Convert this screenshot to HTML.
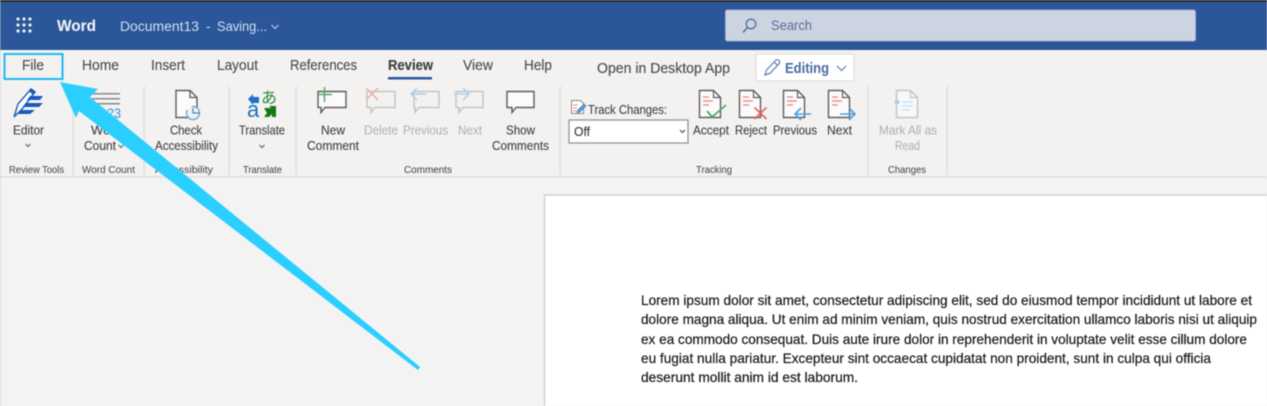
<!DOCTYPE html>
<html><head><meta charset="utf-8"><title>Word</title>
<style>
html,body{margin:0;padding:0;width:1267px;height:406px;overflow:hidden;background:#f3f3f3}
svg{display:block;filter:blur(.42px)}
text{font-family:"Liberation Sans",sans-serif;font-size:12.5px;fill:#444;stroke:#444;stroke-width:.12}
.n{font-size:14.5px;fill:#4b4b4b;stroke:#4b4b4b}
.g{font-size:10.5px;fill:#555;stroke:#555}
.d{fill:#b5b5b5;stroke:#b5b5b5}
.b{font-size:14px;fill:#1a1a1a;stroke:#1a1a1a;stroke-width:.22}
.s{fill:none;stroke:#605e5c;stroke-width:1.4}
.l{fill:none;stroke:#c4c4c4;stroke-width:1.4}
</style></head><body>
<svg width="1267" height="406" viewBox="0 0 1267 406" xmlns="http://www.w3.org/2000/svg">
<rect width="1267" height="406" fill="#f3f3f3"/>
<rect width="1267" height="50" fill="#2b579a"/>
<rect width="1267" height="2" fill="#252525"/>
<rect y="50" width="1267" height="126" fill="#f3f2f1"/>
<rect y="176" width="1267" height="2" fill="#e3e2e1"/>
<rect width="1" height="406" y="2" fill="#9a9a9a" opacity=".25"/>

<!-- waffle -->
<g fill="#e8edf5"><circle cx="18" cy="19" r="1.6"/><circle cx="24" cy="19" r="1.6"/><circle cx="30" cy="19" r="1.6"/><circle cx="18" cy="25" r="1.6"/><circle cx="24" cy="25" r="1.6"/><circle cx="30" cy="25" r="1.6"/><circle cx="18" cy="31" r="1.6"/><circle cx="24" cy="31" r="1.6"/><circle cx="30" cy="31" r="1.6"/></g>
<text x="57" y="31" textLength="39" lengthAdjust="spacingAndGlyphs" style="font-size:16px;font-weight:bold;fill:#f5f7fa;stroke:none">Word</text>
<text x="120" y="31" textLength="79" lengthAdjust="spacingAndGlyphs" style="font-size:14px;fill:#d5deec;stroke:none">Document13</text>
<text x="206" y="31" style="font-size:14px;fill:#d5deec;stroke:none">-</text>
<text x="217" y="31" textLength="50" lengthAdjust="spacingAndGlyphs" style="font-size:14px;fill:#d5deec;stroke:none">Saving...</text>
<path d="M271.500 25l3.500 3.500 3.500-3.500" fill="none" stroke="#c3cfe2" stroke-width="1"/>

<!-- search -->
<rect x="725.500" y="10" width="470" height="31" rx="2" fill="#cdd4e1" stroke="#a9b8d2" stroke-width=".8"/>
<circle cx="751" cy="24" r="4.800" fill="none" stroke="#54709f" stroke-width="1.300"/>
<path d="M747.500 27.500l-4.500 5" stroke="#54709f" stroke-width="1.500" fill="none"/>
<text x="771" y="30" textLength="41" lengthAdjust="spacingAndGlyphs" style="font-size:14px;fill:#55709c;stroke:none">Search</text>

<!-- tabs -->
<text class="n" x="22" y="70" textLength="22" lengthAdjust="spacingAndGlyphs">File</text>
<text class="n" x="82" y="70" textLength="37" lengthAdjust="spacingAndGlyphs">Home</text>
<text class="n" x="151" y="70" textLength="34" lengthAdjust="spacingAndGlyphs">Insert</text>
<text class="n" x="217" y="70" textLength="41" lengthAdjust="spacingAndGlyphs">Layout</text>
<text class="n" x="290" y="70" textLength="67" lengthAdjust="spacingAndGlyphs">References</text>
<text class="n" x="388" y="70" textLength="45" lengthAdjust="spacingAndGlyphs" style="font-weight:bold;fill:#3a3a3a">Review</text>
<rect x="388" y="77" width="44" height="2.500" fill="#2b579a"/>
<text class="n" x="463" y="70" textLength="30" lengthAdjust="spacingAndGlyphs">View</text>
<text class="n" x="524" y="70" textLength="28" lengthAdjust="spacingAndGlyphs">Help</text>
<text class="n" x="597" y="73" textLength="133" lengthAdjust="spacingAndGlyphs">Open in Desktop App</text>
<rect x="756" y="54" width="98" height="27" rx="2" fill="#fff" stroke="#e1dfdd" stroke-width="1.200"/>
<path d="M765 75l1.500-5 9-9.500c1.200-1.200 2.600-1 3.500 0s1 2.300 0 3.300l-9 9.500z M774 62l4 3.800" fill="none" stroke="#5f7fb5" stroke-width="1.200"/>
<text x="785" y="73" textLength="44" lengthAdjust="spacingAndGlyphs" style="font-size:15px;font-weight:bold;fill:#4a6aa3;stroke:none">Editing</text>
<path d="M837 66l4.500 4.500 4.500-4.500" fill="none" stroke="#5f7fb5" stroke-width="1.200"/>

<!-- separators -->
<g fill="#dcdbda"><rect x="72.500" y="86" width="1.300" height="89"/><rect x="143.500" y="86" width="1.300" height="89"/><rect x="228.500" y="86" width="1.300" height="89"/><rect x="295.500" y="86" width="1.300" height="89"/><rect x="559.500" y="86" width="1.300" height="89"/><rect x="867.500" y="86" width="1.300" height="89"/><rect x="946.500" y="86" width="1.300" height="89"/></g>

<!-- Editor icon -->
<path d="M14 117l4-13 13-15 4 3-13 17z" fill="#fff" stroke="#2a63c4" stroke-width="1.500"/>
<g fill="#185abd"><path d="M30 96h13l-3 4H27z"/><path d="M26 103h17l-4 4H23z"/><path d="M21 110h14l-5 4H18z"/><path d="M31 88l5 4-3 3-4-4z"/></g>
<text x="13" y="134.500" textLength="31" lengthAdjust="spacingAndGlyphs">Editor</text>
<path d="M25.500 144l2.500 2.500 2.500-2.500" fill="none" stroke="#555" stroke-width="1"/>

<!-- Word count -->
<g fill="#8a8a8a"><rect x="92" y="93" width="28" height="1.500"/><rect x="92" y="98" width="28" height="1.500"/><rect x="92" y="103" width="28" height="1.500"/></g>
<text x="100" y="118" textLength="21" lengthAdjust="spacingAndGlyphs" style="font-size:14px;fill:#3f8fd0;stroke:none">123</text>
<text x="91" y="134.500" textLength="31" lengthAdjust="spacingAndGlyphs">Word</text>
<text x="84" y="150" textLength="32" lengthAdjust="spacingAndGlyphs">Count</text>
<path d="M118.500 145l2.500 2.500 2.500-2.500" fill="none" stroke="#555" stroke-width="1"/>

<!-- Check accessibility -->
<path d="M176 90.500h14l7 7v20h-21z" style="fill:#fbfbfb" class="s"/>
<path d="M190 90.500v7h7" fill="none" stroke="#605e5c" stroke-width="1.300"/>
<circle cx="193" cy="113" r="6.500" fill="#f3f2f1" stroke="#6ea9dc" stroke-width="1.400" stroke-dasharray="30 6" transform="rotate(-60 193 113)"/>
<path d="M193 108v5h7" fill="none" stroke="#3f8fd0" stroke-width="1.300"/>
<text x="170" y="134.500" textLength="32" lengthAdjust="spacingAndGlyphs">Check</text>
<text x="155" y="150" textLength="63" lengthAdjust="spacingAndGlyphs">Accessibility</text>

<!-- Translate -->
<path d="M248 99l5-5v3h6v6h-6v2z" fill="#1f6fc4"/>
<text x="247" y="117" style="font-size:22px;fill:#1f6fc4;stroke:none">a</text>
<text x="261" y="103" style="font-family:'Noto Sans CJK JP',sans-serif;font-size:16px;fill:#2c8a3c;stroke:none">あ</text>
<path d="M264 108h7l-2-2h7v11h-4l0-3-3 3h-5l3-4z" fill="#107c10"/>
<text x="239" y="134.500" textLength="46" lengthAdjust="spacingAndGlyphs">Translate</text>
<path d="M259.500 145l2.500 2.500 2.500-2.500" fill="none" stroke="#555" stroke-width="1"/>

<!-- New comment -->
<path class="s" d="M318 91.500h28v16h-21l-4 5v-5h-3z" style="fill:#fbfbfb"/>
<path d="M324.500 87v15M317 94.500h15" stroke="#54a868" stroke-width="1.500" fill="none"/>
<text x="321" y="134.500" textLength="24" lengthAdjust="spacingAndGlyphs">New</text>
<text x="307" y="150" textLength="52" lengthAdjust="spacingAndGlyphs">Comment</text>

<!-- Delete -->
<path class="l" d="M367 91.500h28v16h-20l-4 5v-5h-4z"/>
<path d="M366 88l12 12M378 88l-12 12" stroke="#f0a8a4" stroke-width="1.400" fill="none"/>
<text class="d" x="364" y="134.500" textLength="34" lengthAdjust="spacingAndGlyphs">Delete</text>
<!-- Previous -->
<path class="l" d="M414 91.500h25v16h-20l-4 5v-5h-1z"/>
<path d="M426 94h-14m5-6l-6 6 6 6" stroke="#a9cfee" stroke-width="1.400" fill="none"/>
<text class="d" x="403" y="134.500" textLength="45" lengthAdjust="spacingAndGlyphs">Previous</text>
<!-- Next -->
<path class="l" d="M456 91.500h27v16h-20l-4 5v-5h-3z"/>
<path d="M454 94h14m-5-6l6 6-6 6" stroke="#a9cfee" stroke-width="1.400" fill="none"/>
<text class="d" x="458" y="134.500" textLength="24" lengthAdjust="spacingAndGlyphs">Next</text>
<!-- Show -->
<path class="s" d="M507 91.500h27v16h-18l-4 5v-5h-5z" style="fill:#fbfbfb"/>
<text x="506" y="134.500" textLength="29" lengthAdjust="spacingAndGlyphs">Show</text>
<text x="492" y="150" textLength="57" lengthAdjust="spacingAndGlyphs">Comments</text>

<!-- Track changes -->
<path d="M571.500 100.500h9l3 3v10h-12z" fill="#fff" stroke="#8a8a8a"/>
<path d="M573 105h5M573 108h4M573 111h4" stroke="#ee8a8a" stroke-width="1"/>
<path d="M577 113l1-3 6-6 2 2-6 6z" fill="#5aa0dc" stroke="#2b79c2" stroke-width=".7"/>
<text x="588" y="114" textLength="79" lengthAdjust="spacingAndGlyphs">Track Changes:</text>
<rect x="569" y="120" width="119" height="23" fill="#fff" stroke="#8f8f8f" stroke-width="1.200"/>
<text x="574" y="136" textLength="16" lengthAdjust="spacingAndGlyphs" style="fill:#333">Off</text>
<path d="M680 130l2.500 2.500 2.500-2.500" fill="none" stroke="#444" stroke-width="1.100"/>

<!-- Accept -->
<path class="s" d="M699.500 90.500h14l7 7v20h-21z" style="fill:#fbfbfb"/><path d="M713.500 90.500v7h7" fill="none" stroke="#605e5c" stroke-width="1.200"/><path d="M703 97h6M703 101h10M703 105h6" stroke="#ee7f7f" stroke-width="1.200"/>
<path d="M707 111l5 6 14-12" fill="none" stroke="#4da862" stroke-width="1.800"/>
<text x="693" y="134.500" textLength="36" lengthAdjust="spacingAndGlyphs">Accept</text>
<!-- Reject -->
<path class="s" d="M739.500 90.500h14l7 7v20h-21z" style="fill:#fbfbfb"/><path d="M753.500 90.500v7h7" fill="none" stroke="#605e5c" stroke-width="1.200"/><path d="M743 97h6M743 101h10M743 105h6" stroke="#ee7f7f" stroke-width="1.200"/>
<path d="M754.500 107.500l12 11.500m0-11.500l-12 11.500" stroke="#e8615e" stroke-width="1.700" fill="none"/>
<text x="735" y="134.500" textLength="32" lengthAdjust="spacingAndGlyphs">Reject</text>
<!-- Previous -->
<path class="s" d="M783.500 90.500h14l7 7v20h-21z" style="fill:#fbfbfb"/><path d="M797.500 90.500v7h7" fill="none" stroke="#605e5c" stroke-width="1.200"/><path d="M787 97h6M787 101h10M787 105h6" stroke="#ee7f7f" stroke-width="1.200"/>
<path d="M811 114h-16m6-6l-6 6 6 6" fill="none" stroke="#4a9fe0" stroke-width="1.600"/>
<text x="773" y="134.500" textLength="44" lengthAdjust="spacingAndGlyphs">Previous</text>
<!-- Next -->
<path class="s" d="M828.500 90.500h14l7 7v20h-21z" style="fill:#fbfbfb"/><path d="M842.500 90.500v7h7" fill="none" stroke="#605e5c" stroke-width="1.200"/><path d="M832 97h6M832 101h10M832 105h6" stroke="#ee7f7f" stroke-width="1.200"/>
<path d="M840 114h15m-6-6l6 6-6 6" fill="none" stroke="#4a9fe0" stroke-width="1.600"/>
<text x="827" y="134.500" textLength="25" lengthAdjust="spacingAndGlyphs">Next</text>

<!-- Mark all -->
<path class="l" d="M896.500 90.500h14l7 7v20h-21z" style="fill:#f8f8f8"/>
<path d="M910.500 90.500v7h7" fill="none" stroke="#c4c4c4" stroke-width="1.200"/>
<circle cx="897" cy="102" r="2.500" fill="#a9cfee"/>
<path d="M902 102h11M902 106h11M902 110h8" stroke="#c5dff2" stroke-width="1.200"/>
<text class="d" x="879" y="134.500" textLength="58" lengthAdjust="spacingAndGlyphs">Mark All as</text>
<text class="d" x="895" y="150" textLength="25" lengthAdjust="spacingAndGlyphs">Read</text>

<!-- group labels -->
<text class="g" x="9" y="173" textLength="55" lengthAdjust="spacingAndGlyphs">Review Tools</text>
<text class="g" x="82" y="173" textLength="53" lengthAdjust="spacingAndGlyphs">Word Count</text>
<text class="g" x="155" y="173" textLength="58" lengthAdjust="spacingAndGlyphs">Accessibility</text>
<text class="g" x="243" y="173" textLength="39" lengthAdjust="spacingAndGlyphs">Translate</text>
<text class="g" x="404" y="173" textLength="48" lengthAdjust="spacingAndGlyphs">Comments</text>
<text class="g" x="696" y="173" textLength="36" lengthAdjust="spacingAndGlyphs">Tracking</text>
<text class="g" x="888" y="173" textLength="38" lengthAdjust="spacingAndGlyphs">Changes</text>

<!-- document -->
<rect x="544.500" y="195" width="730" height="220" fill="#fff" stroke="#c8c8c8" stroke-width="1.200"/>
<text class="b" x="641" y="305" textLength="611" lengthAdjust="spacingAndGlyphs">Lorem ipsum dolor sit amet, consectetur adipiscing elit, sed do eiusmod tempor incididunt ut labore et</text>
<text class="b" x="641" y="324" textLength="616" lengthAdjust="spacingAndGlyphs">dolore magna aliqua. Ut enim ad minim veniam, quis nostrud exercitation ullamco laboris nisi ut aliquip</text>
<text class="b" x="641" y="344" textLength="606" lengthAdjust="spacingAndGlyphs">ex ea commodo consequat. Duis aute irure dolor in reprehenderit in voluptate velit esse cillum dolore</text>
<text class="b" x="641" y="363" textLength="570" lengthAdjust="spacingAndGlyphs">eu fugiat nulla pariatur. Excepteur sint occaecat cupidatat non proident, sunt in culpa qui officia</text>
<text class="b" x="641" y="382" textLength="217" lengthAdjust="spacingAndGlyphs">deserunt mollit anim id est laborum.</text>

<!-- annotations -->
<rect x="4.500" y="54" width="58" height="25" fill="none" stroke="#22b8f5" stroke-width="2"/>
<path d="M60 82L98 89 90 97 420 367 418 370 79 111 76 118Z" fill="#2bcfff"/>
</svg>
</body></html>
